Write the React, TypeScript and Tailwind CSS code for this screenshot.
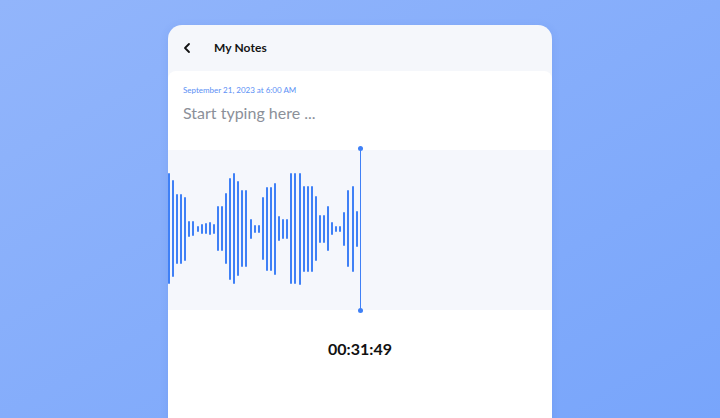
const bars = [
  111, 97, 70, 70, 64, 16, 15, 6, 10, 11, 13, 10, 45, 45, 71, 102, 111, 95, 77, 77, 20, 8, 8, 63, 84, 84,
  92, 25, 20, 20, 111, 111, 112, 86, 86, 86, 65, 28, 28, 45, 13, 6, 6, 34, 77, 86, 36,
];

const Waveform = () => (
  <div className="relative h-[160px] bg-[#f5f7fc] mt-[25px]">
    <div className="flex items-center justify-between w-[190px] h-full pb-[3px]">
      {bars.map((h, i) => (
        <span key={i} className="w-[2px] rounded-full bg-[#3f80f6]" style={{ height: h }} />
      ))}
    </div>
    <div className="absolute left-[192px] top-[-2px] bottom-[-1px] w-px bg-[#3f80f6]">
      <span className="absolute left-[-2px] top-[-2px] w-[5px] h-[5px] rounded-full bg-[#3f80f6]" />
      <span className="absolute left-[-2px] bottom-[-2px] w-[5px] h-[5px] rounded-full bg-[#3f80f6]" />
    </div>
  </div>
);

const App = () => {
  return (
    <div
      className="w-[720px] h-[418px] overflow-hidden bg-gradient-to-br from-[#92b5fb] to-[#78a5fb] pt-[25px]"
      style={{ fontFamily: 'Lato, "Noto Sans", sans-serif' }}
    >
      <div className="ml-[168px] w-[384px] h-[420px] rounded-t-[14px] bg-[#f5f7fb] flex flex-col shadow-[0_2px_10px_rgba(40,80,180,0.12)] overflow-hidden">
        <div className="h-[46px] flex items-center shrink-0">
          <svg width="10" height="12" viewBox="0 0 10 12" className="ml-[14px]">
            <path d="M7 2 L3 6 L7 10" fill="none" stroke="#111" strokeWidth="1.8" strokeLinecap="round" strokeLinejoin="round" />
          </svg>
          <span className="ml-[22px] text-[12px] font-bold text-[#141414] tracking-[0.1px]">My Notes</span>
        </div>
        <div className="flex-1 bg-white rounded-t-[8px] flex flex-col">
          <div className="px-[15px] pt-[14px]">
            <div className="text-[8px] leading-[11px] text-[#5b8ff5]">September 21, 2023 at 6:00 AM</div>
            <div className="mt-[5px] text-[16px] leading-[24px] text-[#8b9099]">Start typing here ...</div>
          </div>
          <Waveform />
          <div className="mt-[29px] text-center text-[16px] leading-[20px] font-bold text-[#111]">00:31:49</div>
        </div>
      </div>
    </div>
  );
};

export default App;
